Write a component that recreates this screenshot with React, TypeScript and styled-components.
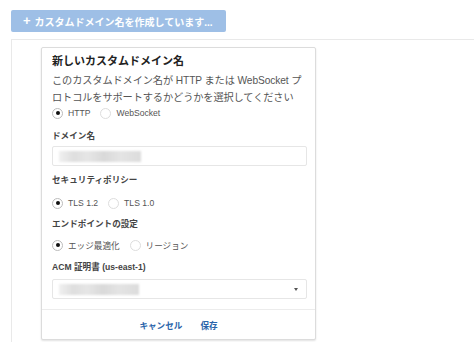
import React from "react";
import styled, { createGlobalStyle } from "styled-components";

const Global = createGlobalStyle`
  html, body { margin: 0; padding: 0; background: #fff; overflow: hidden; }
  body { font-family: "Liberation Sans", "Noto Sans CJK JP", sans-serif; }
`;

const Page = styled.div`
  display: flex;
  flex-direction: column;
  padding: 10px 0 0 11px;
`;

const CreateButton = styled.button`
  flex-shrink: 0;
  width: 215px;
  height: 22px;
  border: none;
  border-radius: 2px;
  background: #9ebfe6;
  color: #fff;
  font-family: "Liberation Sans", "Noto Sans CJK JP", sans-serif;
  font-size: 10px;
  font-weight: 700;
  display: flex;
  align-items: center;
  gap: 4px;
  padding: 0 0 0 12px;
  cursor: default;
`;

const Plus = styled.span`
  font-size: 13px;
  line-height: 1;
  margin-top: -1px;
`;

const Outer = styled.div`
  margin-top: 7px;
  height: 303px;
  box-sizing: border-box;
  border-top: 1px solid #e9e9e9;
  border-left: 1px solid #e9e9e9;
  padding: 7px 0 0 29px;
`;

const Card = styled.div`
  width: 275px;
  box-sizing: border-box;
  border: 1px solid #dcdcdc;
  border-radius: 2px;
  box-shadow: 0 1px 2px rgba(0, 0, 0, 0.12);
  background: #fff;
  display: flex;
  flex-direction: column;
`;

const Body = styled.div`
  padding: 4px 8px 10px 10px;
  display: flex;
  flex-direction: column;
`;

const Title = styled.div`
  font-family: "Noto Sans CJK JP", sans-serif;
  font-size: 11px;
  font-weight: 700;
  line-height: 16px;
  color: #222;
`;

const Desc = styled.div`
  margin-top: 4px;
  font-family: "Liberation Sans", "Noto Sans CJK JP", sans-serif;
  font-size: 10.2px;
  line-height: 17px;
  color: #555;
  letter-spacing: -0.1px;
`;

const Label = styled.div<{ $gap: number }>`
  margin-top: ${(p) => p.$gap}px;
  font-family: "Liberation Sans", "Noto Sans CJK JP", sans-serif;
  font-size: 8.6px;
  font-weight: 700;
  line-height: 12px;
  color: #444;
`;

const RadioRow = styled.div<{ $gap: number }>`
  margin-top: ${(p) => p.$gap}px;
  display: flex;
  align-items: center;
  height: 14px;
  gap: 10px;
`;

const RadioItem = styled.label`
  display: flex;
  align-items: center;
  gap: 5px;
  font-family: "Liberation Sans", "Noto Sans CJK JP", sans-serif;
  font-size: 8.6px;
  color: #555;
`;

const Circle = styled.span<{ $on?: boolean }>`
  width: 9px;
  height: 9px;
  border-radius: 50%;
  border: 1px solid ${(p) => (p.$on ? "#bbb" : "#ddd")};
  background: #fff;
  display: flex;
  align-items: center;
  justify-content: center;
  &::after {
    content: "";
    width: 4px;
    height: 4px;
    border-radius: 50%;
    background: ${(p) => (p.$on ? "#111" : "transparent")};
  }
`;

const Field = styled.div<{ $gap: number }>`
  margin-top: ${(p) => p.$gap}px;
  width: 255px;
  height: 20px;
  box-sizing: border-box;
  border: 1px solid #e6e6e6;
  border-radius: 2px;
  display: flex;
  align-items: center;
  justify-content: space-between;
  padding: 0 8px 0 6px;
`;

const Blur = styled.div<{ $w: number }>`
  width: ${(p) => p.$w}px;
  height: 11px;
  background: linear-gradient(
    90deg,
    #f0f0f0 0%,
    #dedede 18%,
    #e6e6e6 35%,
    #d9d9d9 55%,
    #e4e4e4 75%,
    #dcdcdc 100%
  );
  filter: blur(1px);
`;

const Caret = styled.span`
  width: 0;
  height: 0;
  border-left: 2px solid transparent;
  border-right: 2px solid transparent;
  border-top: 3px solid #555;
`;

const Footer = styled.div`
  border-top: 1px solid #ececec;
  height: 29px;
  display: flex;
  align-items: center;
  justify-content: center;
  gap: 18px;
`;

const LinkButton = styled.button`
  border: none;
  background: none;
  padding: 0;
  font-family: "Noto Sans CJK JP", sans-serif;
  font-size: 8.6px;
  font-weight: 700;
  color: #2a64aa;
  cursor: default;
`;

const Radio = ({ on, children }: { on?: boolean; children: React.ReactNode }) => (
  <RadioItem>
    <Circle $on={on} />
    {children}
  </RadioItem>
);

export default function App() {
  return (
    <>
      <Global />
      <Page>
        <CreateButton>
          <Plus>+</Plus>
          カスタムドメイン名を作成しています...
        </CreateButton>
        <Outer>
          <Card>
            <Body>
              <Title>新しいカスタムドメイン名</Title>
              <Desc>
                このカスタムドメイン名が HTTP または WebSocket プ
                <br />
                ロトコルをサポートするかどうかを選択してください
              </Desc>
              <RadioRow $gap={0}>
                <Radio on>HTTP</Radio>
                <Radio>WebSocket</Radio>
              </RadioRow>
              <Label $gap={10}>ドメイン名</Label>
              <Field $gap={4}>
                <Blur $w={82} />
              </Field>
              <Label $gap={8}>セキュリティポリシー</Label>
              <RadioRow $gap={10}>
                <Radio on>TLS 1.2</Radio>
                <Radio>TLS 1.0</Radio>
              </RadioRow>
              <Label $gap={8}>エンドポイントの設定</Label>
              <RadioRow $gap={8}>
                <Radio on>エッジ最適化</Radio>
                <Radio>リージョン</Radio>
              </RadioRow>
              <Label $gap={9}>ACM 証明書 (us-east-1)</Label>
              <Field $gap={6}>
                <Blur $w={80} />
                <Caret />
              </Field>
            </Body>
            <Footer>
              <LinkButton>キャンセル</LinkButton>
              <LinkButton>保存</LinkButton>
            </Footer>
          </Card>
        </Outer>
      </Page>
    </>
  );
}
